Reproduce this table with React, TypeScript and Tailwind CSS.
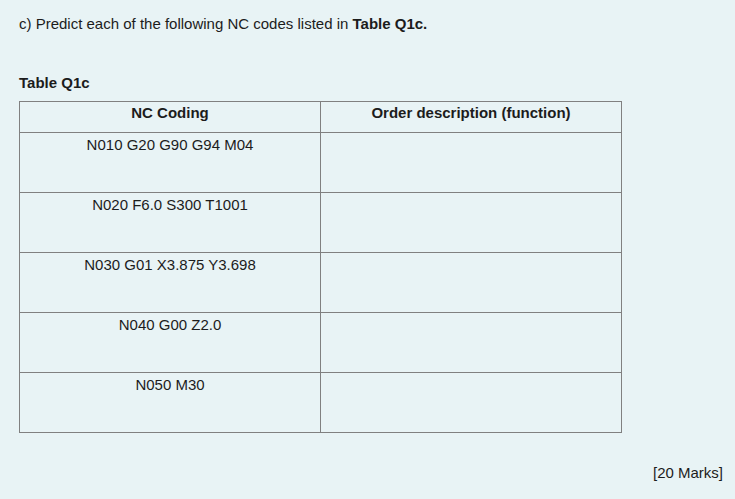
const rows = [
  'N010 G20 G90 G94 M04',
  'N020 F6.0 S300 T1001',
  'N030 G01 X3.875 Y3.698',
  'N040 G00 Z2.0',
  'N050 M30',
];

export default function App() {
  return (
    <div className="h-[499px] w-[735px] bg-[#e8f3f5] text-[15px] leading-[17px] text-[#1c1c1c] font-['Liberation_Sans',Arial,sans-serif]">
      <div className="px-[19px] pt-[15px]">
        <p>
          c) Predict each of the following NC codes listed in <b>Table Q1c.</b>
        </p>
        <p className="mt-[42px] font-bold">Table Q1c</p>

        <table className="mt-[10px] w-[603px] border-collapse table-fixed">
          <thead>
            <tr className="h-[31px]">
              <th className="border border-[#808080] align-top pt-[2px] font-bold">NC Coding</th>
              <th className="border border-[#808080] align-top pt-[2px] font-bold">Order description (function)</th>
            </tr>
          </thead>
          <tbody>
            {rows.map((code) => (
              <tr key={code} className="h-[60px]">
                <td className="border border-[#808080] align-top pt-[3px] text-center">{code}</td>
                <td className="border border-[#808080]"></td>
              </tr>
            ))}
          </tbody>
        </table>
      </div>

      <div className="mt-[31px] pr-[12px] text-right">[20 Marks]</div>
    </div>
  );
}
